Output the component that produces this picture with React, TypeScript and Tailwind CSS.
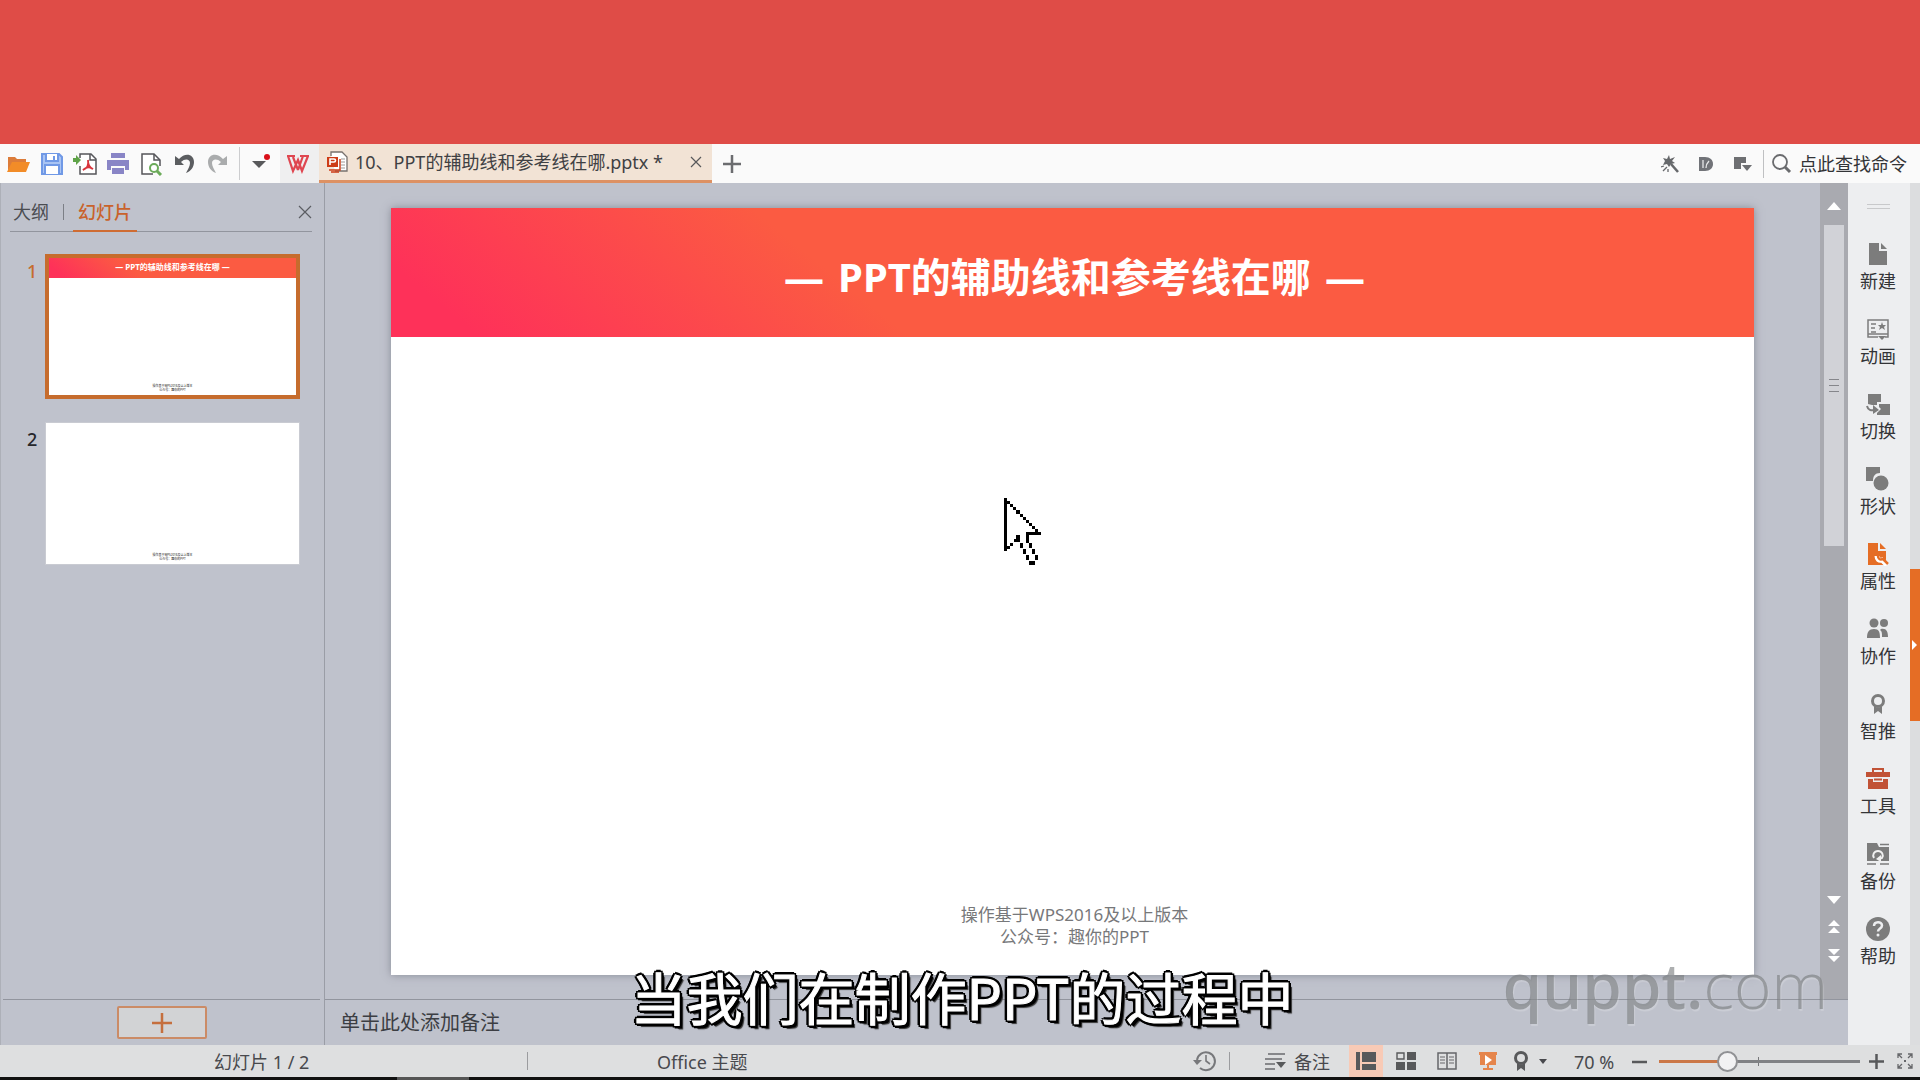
import React from 'react';

const CJK = "font-['Noto_Sans','Noto_Sans_CJK_SC',sans-serif]";

type IconProps = { children: React.ReactNode; w?: number; h?: number; className?: string };

function Icon({ children, w = 24, h = 24, className = '' }: IconProps) {
  return (
    <svg width={w} height={h} viewBox={`0 0 ${w} ${h}`} fill="none" className={`shrink-0 ${className}`} aria-hidden="true">
      {children}
    </svg>
  );
}

function Badge({ color = '#58595b' }: { color?: string }) {
  return (
    <Icon w={16} h={22}>
      <circle cx="8" cy="8" r="5.5" stroke={color} strokeWidth="3" />
      <path d="M4 13v8l4-3 4 3v-8l-4 2z" fill={color} />
    </Icon>
  );
}

const quickTools = [
  {
    label: '打开',
    icon: (
      <Icon>
        <path d="M1 19V5h7l2 2h9v4H6z" fill="#dc7c3a" />
        <path d="M0 20 5 10h18l-4 10z" fill="#f28c28" />
      </Icon>
    ),
  },
  {
    label: '保存',
    icon: (
      <Icon>
        <path d="M2 2h17l3 3v17H2z" fill="#a9c4f3" stroke="#7099e6" strokeWidth="2" />
        <path d="M6 2v7h12V2M5 22v-9h14v9" fill="#fff" stroke="#7099e6" strokeWidth="2" />
        <path d="M14 4v4" stroke="#7099e6" strokeWidth="2" />
      </Icon>
    ),
  },
  {
    label: '输出为PDF',
    icon: (
      <Icon>
        <path d="M7 6V2h11l5 5v15H7v-8" fill="#fff" stroke="#55565a" strokeWidth="1.5" />
        <path d="M17 2v6h6" stroke="#55565a" strokeWidth="1.5" />
        <path d="M0 6h3V3l5 5-5 5v-3H0z" fill="#5fa348" />
        <path d="M15 8c1 6-2 9-5 10 3-3 7-3 10-1-3-1-5-4-5-9" stroke="#d9343c" strokeWidth="1.8" />
      </Icon>
    ),
  },
  {
    label: '打印',
    icon: (
      <Icon>
        <path d="M5 1h14v5H5zM1 8h22v10h-4v-4H5v4H1z" fill="#8985c6" />
        <path d="M6 16h12v6H6z" fill="#8985c6" />
      </Icon>
    ),
  },
  {
    label: '打印预览',
    icon: (
      <Icon>
        <path d="M14 22H3V2h12l6 6v6" fill="#fff" stroke="#55565a" strokeWidth="1.5" />
        <path d="M15 2v6h6" stroke="#55565a" strokeWidth="1.5" />
        <circle cx="15" cy="16" r="4" stroke="#6cab5a" strokeWidth="2" fill="#fff" />
        <path d="m18 19 4 4" stroke="#6cab5a" strokeWidth="3" />
      </Icon>
    ),
  },
  {
    label: '撤销',
    icon: (
      <Icon>
        <path d="M3 4v9h9l-3-3c4-4 9-3 9 1 0 3-2 6-4 10 5-2 8-6 8-11 0-8-9-10-15-3z" fill="#5b5d60" />
      </Icon>
    ),
  },
  {
    label: '恢复',
    icon: (
      <Icon>
        <path d="M22 4v9h-9l3-3c-4-4-9-3-9 1 0 3 2 6 4 10-5-2-8-6-8-11C3 2 12 0 18 7z" fill="#aaacad" />
      </Icon>
    ),
  },
];

const sideItems = [
  {
    label: '新建',
    icon: (
      <Icon>
        <path d="M3 1h10v8h8v14H3z" fill="#7c7c7c" />
        <path d="m15 1 6 6h-6z" fill="#7c7c7c" />
      </Icon>
    ),
  },
  {
    label: '动画',
    icon: (
      <Icon>
        <path d="M12 20H2V3h20v17h-3" stroke="#7c7c7c" strokeWidth="1.5" />
        <path d="M5 7h5M5 11h4M5 15h5M2 17h20" stroke="#7c7c7c" strokeWidth="1.3" />
        <path d="m16 5 1 3h3l-2 2 1 3-3-2-3 2 1-3-2-2h3zM12 19h8l-4 4z" fill="#7c7c7c" />
      </Icon>
    ),
  },
  {
    label: '切换',
    icon: (
      <Icon>
        <path d="M2 2h13v8h-4v3H6l-4-1z" fill="#7c7c7c" />
        <path d="M13 12h11v11H11v-2l4-4-2-2z" fill="#7c7c7c" />
        <path d="M1 14c1 4 4 5 8 4" stroke="#7c7c7c" strokeWidth="2" />
        <path d="m7 13 6 5-6 4z" fill="#7c7c7c" />
      </Icon>
    ),
  },
  {
    label: '形状',
    icon: (
      <Icon>
        <path d="M0 0h14v6c-5 0-7 3-7 8H0z" fill="#7c7c7c" />
        <circle cx="15" cy="16" r="7.5" fill="#7c7c7c" />
      </Icon>
    ),
  },
  {
    label: '属性',
    icon: (
      <Icon>
        <path d="M2 1h10v8h8v14H2z" fill="#e56d25" />
        <path d="m14 1 6 6h-6z" fill="#e56d25" />
        <path d="M11 14c0 3 2 5 5 4l5 5" stroke="#fff" strokeWidth="5" />
        <path d="M12 14c0 3 2 4 5 3l5 5M18 17c1-2 0-4-2-4" stroke="#e56d25" strokeWidth="2.5" />
      </Icon>
    ),
  },
  {
    label: '协作',
    icon: (
      <Icon>
        <circle cx="8" cy="6" r="4.5" fill="#7c7c7c" />
        <circle cx="18" cy="6" r="4" fill="#7c7c7c" />
        <path d="M1 21c0-6 2-9 7-9s6 3 6 9zM15 12c5-1 7 2 7 8h-6c0-4 0-6-2-7z" fill="#7c7c7c" />
      </Icon>
    ),
  },
  { label: '智推', icon: <Badge color="#7c7c7c" /> },
  {
    label: '工具',
    icon: (
      <Icon>
        <path d="M7 6V2h10v4" stroke="#c15236" strokeWidth="2" />
        <path d="M0 5h24v5H0z" fill="#c15236" />
        <path d="M2 12h5v3h10v-3h5v10H2z" fill="#c15236" />
        <path d="M8 12.5h8" stroke="#c15236" strokeWidth="2" />
      </Icon>
    ),
  },
  {
    label: '备份',
    icon: (
      <Icon>
        <path d="M1 1h10l2 4h10v14H1z" fill="#7c7c7c" />
        <path d="M14 2.5h9M1 22h9M14 22h9" stroke="#7c7c7c" strokeWidth="1.5" />
        <path d="M8 16c-2-3 0-7 4-7s6 4 4 7l-3 1" stroke="#f1f1f1" strokeWidth="2" />
        <path d="m15 13-5 4 5 3z" fill="#f1f1f1" />
      </Icon>
    ),
  },
  {
    label: '帮助',
    icon: (
      <Icon>
        <circle cx="12" cy="12" r="12" fill="#7c7c7c" />
        <path d="M8 9c0-5 8-5 8-.5 0 3-4 3-4 6" stroke="#edeef0" strokeWidth="2.5" />
        <circle cx="12" cy="18" r="1.5" fill="#edeef0" />
      </Icon>
    ),
  },
];

function TitleBar() {
  return (
    <header className="flex h-[39px] items-stretch bg-[#fafafa] text-lg text-[#3f4043]">
      <div className="flex items-center gap-[9px] pl-[7px]">
        {quickTools.map((tool) => (
          <button key={tool.label} aria-label={tool.label}>
            {tool.icon}
          </button>
        ))}
      </div>
      <div className="my-[3px] ml-[10px] border-l border-[#cccdcf]" />
      <button aria-label="自定义快速访问工具栏" className="flex w-10 items-center justify-center">
        <Icon w={24} h={24}>
          <path d="M4 9h14l-7 7z" fill="#58595b" />
          <circle cx="19" cy="5" r="3" fill="#d9101a" />
        </Icon>
      </button>
      <button aria-label="WPS" className="flex w-[39px] items-center justify-center bg-[#efeff0] pr-1">
        <Icon w={24} h={20}>
          <path d="M1 2h8M14 2h9M2 2l5 15 5-11 4 11 6-15M7 3l5 13M12 16l5-14" stroke="#df4650" strokeWidth="2.2" />
        </Icon>
      </button>
      <div className="flex w-[393px] items-center border-b-[3px] border-[#dd9163] bg-[#f2e3d5] pl-[7px] pr-[10px]">
        <Icon w={22} h={22}>
          <path d="M5 5V1h11l5 5v14H9" fill="#fff" stroke="#77716e" strokeWidth="1.3" />
          <path d="M15 8h4M15 11h4M15 14h4M15 17h4" stroke="#9c9895" />
          <path d="M1 6h11v10H1z" fill="#cd3c17" />
          <path d="M3 19h11V8M5 21h8" stroke="#cd3c17" strokeWidth="1.5" />
          <path d="M4 14V8h4c2 0 2 3 0 3H4" stroke="#fff" strokeWidth="1.6" />
        </Icon>
        <span className="ml-[7px] flex-1 whitespace-nowrap">10、PPT的辅助线和参考线在哪.pptx *</span>
        <button aria-label="关闭">
          <Icon w={12} h={12}>
            <path d="m1 1 10 10M11 1 1 11" stroke="#58595b" strokeWidth="1.2" />
          </Icon>
        </button>
      </div>
      <button aria-label="新建标签" className="flex w-10 items-center justify-center">
        <Icon w={18} h={18}>
          <path d="M9 0v18M0 9h18" stroke="#6b6c6f" strokeWidth="2.5" />
        </Icon>
      </button>
      <div className="ml-auto flex items-center gap-5 pr-[13px]">
        <button aria-label="皮肤">
          <Icon w={18} h={18}>
            <path d="m8 0 1 4 5-2-3 4 3 2-4 1-2 3-2-3-4 1 2-4-2-3 4 1z" fill="#66686b" />
            <path d="m10 9 7 8" stroke="#66686b" strokeWidth="2.5" />
            <path d="m2 16 4-4M0 12l3-1M7 17v-3" stroke="#66686b" strokeWidth="1.3" />
          </Icon>
        </button>
        <button aria-label="稻壳">
          <Icon w={14} h={16}>
            <path d="M0 1h6c5 0 8 3 8 7s-3 7-8 7H0z" fill="#717378" />
            <path d="M4 4v8M10 5c-2 2-3 4-3 7" stroke="#e6e7e8" strokeWidth="1.3" />
          </Icon>
        </button>
        <button aria-label="窗口">
          <Icon w={20} h={16}>
            <path d="M1 1h12v6H8v6H1z" fill="#6e6f72" />
            <path d="M9 9h10l-5 6z" fill="#6e6f72" />
          </Icon>
        </button>
        <label className="-ml-[10px] flex items-center border-l border-[#bfc0c2] pl-2">
          <Icon w={20} h={20} className="mr-[7px]">
            <circle cx="8" cy="8" r="7" stroke="#6a6b6e" strokeWidth="1.8" />
            <path d="m13 13 5 5" stroke="#6a6b6e" strokeWidth="3" />
          </Icon>
          <input aria-label="查找命令" placeholder="点此查找命令" className="w-[108px] outline-none placeholder:text-[#333437] placeholder:opacity-100" />
        </label>
      </div>
    </header>
  );
}

function SlideFooterTiny() {
  return (
    <p className="mt-auto pb-[3px] text-center text-[3px] leading-[4px] text-[#222]">
      操作基于WPS2016及以上版本
      <br />
      公众号：趣你的PPT
    </p>
  );
}

function SlidePanel() {
  return (
    <aside className="flex w-[325px] shrink-0 flex-col border-x border-[#9a9da6] border-l-[#adb0b8]">
      <div className="ml-[9px] mr-3 mt-[10px] flex h-[39px] items-stretch border-b border-[#92959e] text-lg text-[#4b4d52]">
        <button className="px-[3px]">大纲</button>
        <div className="my-[11px] ml-[11px] border-l border-[#7c7f86]" />
        <button className="-mb-px ml-[9px] border-b-2 border-[#cf6c33] px-[5px] font-medium text-[#c9622b]">幻灯片</button>
        <button aria-label="关闭窗格" className="ml-auto">
          <Icon w={14} h={14}>
            <path d="m1 1 12 12M13 1 1 13" stroke="#5b5d63" strokeWidth="1.2" />
          </Icon>
        </button>
      </div>
      <ol className="flex flex-1 flex-col gap-[23px] pl-[26px] pr-6 pt-[22px]">
        <li className="flex items-start">
          <span className="mt-[5px] w-[18px] text-lg font-medium leading-6 text-[#c66c2d]">1</span>
          <div className="flex aspect-[255/145] flex-1 flex-col border-4 border-[#c66c2d] bg-white">
            <div className="h-5 bg-[linear-gradient(39deg,#fe3159_10px,#fb5b42_60px)] text-center text-[8px] font-bold leading-[18px] text-white">
              — PPT的辅助线和参考线在哪 —
            </div>
            <SlideFooterTiny />
          </div>
        </li>
        <li className="flex items-start">
          <span className="mt-[5px] w-[18px] text-lg font-medium leading-6 text-[#26272b]">2</span>
          <div className="flex aspect-[255/143] flex-1 flex-col border border-[#c9cbd2] bg-white">
            <SlideFooterTiny />
          </div>
        </li>
      </ol>
      <div className="ml-[2px] mr-1 flex h-[46px] justify-center border-t border-[#92959e] pt-[6px]">
        <button aria-label="新建幻灯片" className="flex h-[33px] w-[90px] items-center justify-center rounded-xs border-2 border-[#cb8b66] bg-[#d2d3d5]">
          <Icon w={20} h={20}>
            <path d="M10 0v20M0 10h20" stroke="#c56f3e" strokeWidth="2.5" />
          </Icon>
        </button>
      </div>
    </aside>
  );
}

function MousePointer() {
  return (
    <svg width="38" height="68" viewBox="0 0 38 68" className="absolute left-[613px] top-[290px]" shapeRendering="crispEdges" aria-hidden="true">
      <path d="M1 0 36 34H24l12 28-6 4-14-26L1 53z" fill="#fff" />
      <g fill="#000">
        <path d="M0 0h3v53H0zM3 3h3v3H3zM6 6h3v3H6zM9 9h3v3H9zM12 12h4v4h-4zM16 16h3v3h-3zM19 19h3v3h-3zM22 22h3v3h-3zM25 25h3v3h-3zM28 28h3v3h-3zM31 31h3v3h-3z" />
        <path d="M22 34h15v3H25v8h-3zM12 37h4v7h-6v-3h2zM6 45h3v3H6zM3 48h3v3H3z" />
        <path d="M16 45h3v5h-3zM19 51h3v5h-3zM22 57h3v5h-3zM25 63h6v4h-6zM25 45h3v5h-3zM28 51h3v5h-3zM31 57h3v5h-3z" />
      </g>
    </svg>
  );
}

function ScrollBar() {
  return (
    <div className="flex w-7 shrink-0 flex-col items-center bg-[#a9aab0] pt-[19px]">
      <Icon w={14} h={8}>
        <path d="M0 8h14L7 0z" fill="#fff" />
      </Icon>
      <div className="mt-[15px] flex h-[321px] w-5 flex-col items-center justify-center gap-[5px] bg-[#d1d2d7]">
        <span className="h-px w-[10px] bg-[#85868b]" />
        <span className="h-px w-[10px] bg-[#85868b]" />
        <span className="h-px w-[10px] bg-[#85868b]" />
      </div>
      <div className="mb-[37px] mt-auto flex flex-col items-center gap-4">
        <Icon w={14} h={8}>
          <path d="M0 0h14L7 8z" fill="#fff" />
        </Icon>
        <Icon w={12} h={13}>
          <path d="M0 6h12L6 0zM0 13h12L6 7z" fill="#fff" />
        </Icon>
        <Icon w={12} h={13}>
          <path d="M0 0h12L6 6zM0 7h12l-6 6z" fill="#fff" />
        </Icon>
      </div>
    </div>
  );
}

function Workspace() {
  return (
    <main className="flex min-w-0 flex-1 flex-col">
      <div className="flex flex-1">
        <section className="flex flex-1 px-[66px] pb-6 pt-[25px]">
          <div className="relative flex flex-1 flex-col bg-white shadow-[0_0_8px_rgba(90,92,105,0.55)]">
            <h1 className="flex h-[129px] items-center justify-center gap-[14px] bg-[linear-gradient(39deg,#fe3159_56px,#fb5b42_327px)] pl-1 pt-2 text-[40px] font-bold leading-[60px] text-white">
              <span>—</span>
              <span>PPT的辅助线和参考线在哪</span>
              <span>—</span>
            </h1>
            <p className="mt-auto pb-[27px] pl-1 text-center text-[17px] leading-[22px] text-[#77787a]">
              操作基于WPS2016及以上版本
              <br />
              公众号：趣你的PPT
            </p>
            <MousePointer />
          </div>
        </section>
        <ScrollBar />
      </div>
      <div className="flex h-[46px] items-center border-t border-[#92959e] pl-[15px]">
        <input
          aria-label="备注"
          placeholder="单击此处添加备注"
          className="w-80 text-xl text-[#3c3e43] outline-none placeholder:text-[#3c3e43] placeholder:opacity-100"
        />
      </div>
    </main>
  );
}

function ToolRail() {
  return (
    <>
      <nav className="flex w-[62px] shrink-0 flex-col items-center bg-[#edeef0] pr-[2px] text-lg text-[#333437]">
        <div className="mb-[33px] mt-[21px] h-[5px] w-[23px] border-y border-[#c8c9cb]" />
        {sideItems.map((item) => (
          <button key={item.label} className="flex h-[75px] flex-col items-center">
            <span className="flex h-6 items-center">{item.icon}</span>
            <span className="leading-[30px]">{item.label}</span>
          </button>
        ))}
      </nav>
      <div className="flex w-[10px] shrink-0 flex-col bg-[#dcdddf] pt-[386px]">
        <button aria-label="展开任务窗格" className="flex h-[152px] items-center bg-[#e56d25] pl-[2px]">
          <Icon w={5} h={10}>
            <path d="M0 0v10l5-5z" fill="#fff" />
          </Icon>
        </button>
      </div>
    </>
  );
}

function StatusBar() {
  return (
    <footer className="flex h-8 items-center bg-[#dedfe0] text-lg text-[#48494d]">
      <span className="w-[527px] pl-[214px] pt-[2px]">幻灯片 1 / 2</span>
      <span className="h-[18px] border-l border-[#9b9c9f]" />
      <span className="ml-[129px] pt-[2px]">Office 主题</span>
      <div className="ml-auto flex items-center self-stretch">
        <button aria-label="历史版本">
          <Icon>
            <path d="M4 11a9 9 0 1 1 3 8" stroke="#77787b" strokeWidth="2" />
            <path d="M0 11h9l-5 5z" fill="#77787b" />
            <path d="M13 6v6l4 3" stroke="#77787b" strokeWidth="1.6" />
          </Icon>
        </button>
        <span className="ml-3 h-[18px] border-l border-[#9b9c9f]" />
        <button className="ml-[35px] flex items-center gap-[7px]">
          <Icon w={22} h={18}>
            <path d="M3 2h17M0 7h17M0 12h10M0 17h10" stroke="#6a6b6e" strokeWidth="1.5" />
            <path d="M11 10h10l-5 6z" fill="#58595b" />
          </Icon>
          <span className="pt-[2px]">备注</span>
        </button>
        <button aria-label="普通视图" className="ml-[19px] flex w-[34px] items-center justify-center self-stretch bg-[#f8cab6] pr-px">
          <Icon w={20} h={18}>
            <path d="M0 0h4v18H0zM6 0h14v10H6zM6 12h14v6H6z" fill="#58595b" />
          </Icon>
        </button>
        <button aria-label="幻灯片浏览" className="ml-[13px]">
          <Icon w={20} h={18}>
            <path d="M1 1h7v6H1z" stroke="#58595b" strokeWidth="1.4" />
            <path d="M11 0h9v8h-9zM0 10h9v8H0zM11 10h9v8h-9z" fill="#58595b" />
          </Icon>
        </button>
        <button aria-label="阅读视图" className="ml-[21px]">
          <Icon w={20} h={18}>
            <path d="M1 1h18v16H1zM10 1v16" stroke="#66676a" strokeWidth="1.5" />
            <path d="M3 5h5M3 8h5M3 11h5M12 5h5M12 8h5M12 11h5" stroke="#66676a" />
          </Icon>
        </button>
        <button aria-label="放映" className="ml-[22px]">
          <Icon w={18} h={18}>
            <path d="M0 0h18v3h-1v10H1V3H0zM8 13h2v3h4v2H4v-2h4z" fill="#e5854c" />
            <path d="m6 3 7 5-7 5z" fill="#fff" />
          </Icon>
        </button>
        <button aria-label="智能推荐" className="ml-4 flex items-center gap-[10px]">
          <Badge />
          <Icon w={8} h={5}>
            <path d="M0 0h8L4 5z" fill="#48494d" />
          </Icon>
        </button>
        <span className="ml-[27px] w-[46px] whitespace-nowrap pt-px">70 %</span>
        <button aria-label="缩小" className="ml-3">
          <Icon w={15} h={15}>
            <path d="M0 8h15" stroke="#58595b" strokeWidth="2.5" />
          </Icon>
        </button>
        <div className="relative ml-3 flex items-center">
          <span className="absolute left-[99px] h-[9px] w-px bg-[#77787b]" />
          <input
            type="range"
            aria-label="显示比例"
            min={0}
            max={100}
            defaultValue={32}
            className="relative h-5 w-[201px] appearance-none bg-transparent [&::-webkit-slider-runnable-track]:h-[3px] [&::-webkit-slider-runnable-track]:bg-[linear-gradient(to_right,#cb7747_34%,#808184_34%)] [&::-webkit-slider-thumb]:mt-[-9px] [&::-webkit-slider-thumb]:size-[21px] [&::-webkit-slider-thumb]:appearance-none [&::-webkit-slider-thumb]:rounded-full [&::-webkit-slider-thumb]:border-2 [&::-webkit-slider-thumb]:border-[#909194] [&::-webkit-slider-thumb]:bg-[#f2f2f3]"
          />
        </div>
        <button aria-label="放大" className="ml-[9px]">
          <Icon w={15} h={15}>
            <path d="M0 7.5h15M7.5 0v15" stroke="#58595b" strokeWidth="2.5" />
          </Icon>
        </button>
        <button aria-label="适应窗口" className="ml-[13px] mr-[7px]">
          <Icon w={16} h={16}>
            <path d="M1 5V1h4M11 1h4v4M15 11v4h-4M5 15H1v-4M1 1l4 4M15 1l-4 4M15 15l-4-4M1 15l4-4" stroke="#66676a" strokeWidth="1.3" />
            <path d="M7 7h2v2H7z" fill="#66676a" />
          </Icon>
        </button>
      </div>
    </footer>
  );
}

export default function App() {
  return (
    <div className={`relative flex min-h-screen flex-col overflow-hidden bg-[#bfc2cc] ${CJK}`}>
      <div className="h-36 bg-[#df4c47]" />
      <TitleBar />
      <div className="flex flex-1">
        <SlidePanel />
        <Workspace />
        <ToolRail />
      </div>
      <StatusBar />
      <div className="h-[3px] bg-[#111]">
        <div className="ml-[397px] h-full w-[72px] bg-[#555]" />
      </div>

      {/* Video overlays */}
      <p className="pointer-events-none absolute inset-x-0 bottom-[42px] whitespace-nowrap pl-1 text-center font-['Noto_Sans_CJK_SC',sans-serif] text-[56px] leading-[84px] text-white [-webkit-text-stroke:1px_white] [text-shadow:-2px_-2px_0_#000,2px_-2px_0_#000,-2px_2px_0_#000,2px_2px_0_#000,0_-3px_0_#000,-3px_0_0_#000,3px_0_0_#000,0_3px_0_#000,3px_3px_0_#000,4px_4px_1px_#333]">
        当我们在制作PPT的过程中
      </p>
      <p className="pointer-events-none absolute bottom-[50px] right-[92px] font-['Open_Sans',sans-serif] text-[64px] leading-[90px] text-[#767a7c]/60 [text-shadow:1px_2px_1px_rgba(255,255,255,0.2)]">
        <span className="font-['Noto_Sans',sans-serif] font-medium">quppt.</span>
        <span className="font-light">com</span>
      </p>
    </div>
  );
}
